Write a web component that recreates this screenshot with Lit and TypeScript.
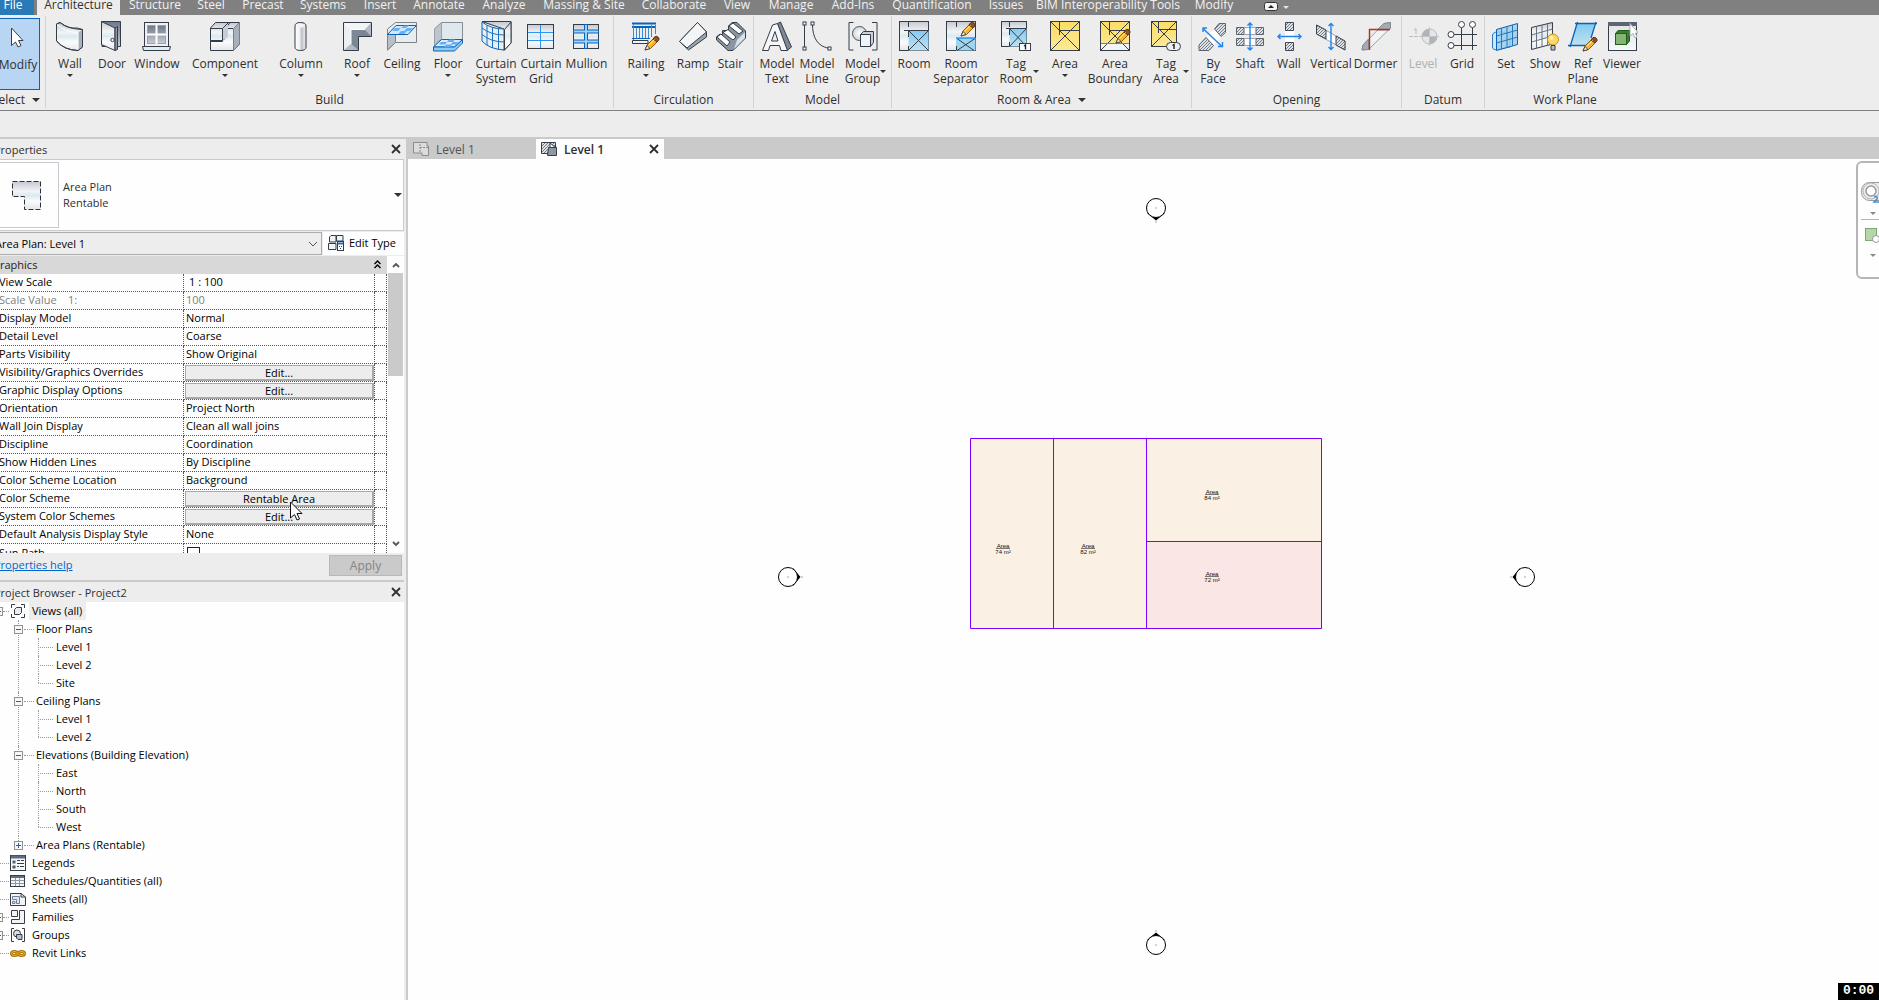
import { LitElement, html, svg, css, nothing } from "lit";
import { customElement } from "lit/decorators.js";
import { classMap } from "lit/directives/class-map.js";

const pencil = svg`
  <path d="M0 14 L2 9 L9.500 1.500 L13 5 L5.500 12.500 Z" fill="#f9b52c" stroke="#8a5a10"/>
  <path d="M8 3 L9.500 1 Q11 -.5 13 1 Q15 3 13.500 4.500 L12 6 Z" fill="#8c5227" stroke="#5d3517"/>
  <path d="M0 14 L2 9.500 L5 12.500 Z" fill="#fff6dc" stroke="#4b4b4b"/>
  <path d="M3.500 9.500 L9.500 3.500" stroke="#ffe9a8" fill="none"/>`;

const planLines = svg`<path d="M10.500 2 V15 M10.500 10.500 H30 M1.500 1.500 L30.500 30.500 M30.500 1.500 L1.500 30.500" class="k"/>`;

const icons: Record<string, unknown> = {
  modify: svg`<path d="M9.500 7 V24.500 L13.500 21 L16 26 L19 24.500 L16.500 19.500 H21 Z" fill="#fff" stroke="#3a3f47"/>`,
  wall: svg`<path d="M2.500 4 L6 2.500 Q14 9 23 8 L28.500 9.500 V27 L24 30.500 Q10 30 2.500 21 Z" fill="url(#face)" class="k"/>
    <path d="M24 12.500 L28.500 9.500 V27 L24 30.500 Z" fill="#a9b0bb"/><path d="M2.500 4 Q12 12.500 24 12.500 V30" class="w"/>
    <path d="M2.500 4 L6 2.500 Q14 9 28.500 9.500 V27 L24 30.500 Q10 30 2.500 21 Z" class="k"/>`,
  door: svg`<path d="M5.500 1.500 H24.500 V26.500 H6 Z" fill="url(#dark)" class="k"/>
    <path d="M5.500 1.500 L19 8 V30.500 L5.500 24.500 Z" fill="url(#face)" class="k"/><path d="M19 8 L21.500 6.500 V29.500 L19 30.500 Z" fill="#8d95a3" class="k"/>
    <circle cx="16.500" cy="20" r="1.700" fill="#fff" class="k"/>`,
  window: svg`<rect x="3.500" y="2.500" width="24" height="24" fill="#eef0f3" class="k"/>
    <rect x="6.500" y="5.500" width="18" height="18" fill="url(#dark)" stroke="#9aa1ac"/><path d="M15.500 5 V24 M6 14.500 H25" stroke="#fff" stroke-width="2" fill="none"/>
    <path d="M1.500 26.500 H29.500 L28.500 30.500 H2.500 Z" fill="#dcedf3" class="k"/>`,
  component: svg`<path d="M1.500 8 L6.500 2.500 H30.500 V24 L24.500 30.500 H1.500 V21.500 H13.500 L1.500 21 Z" fill="url(#face)" class="k"/>
    <path d="M24.500 8.500 L30.500 2.500 V24 L24.500 30.500 Z" fill="#a9b0bb" stroke="#77808d"/>
    <path d="M1.500 8.500 H13.500 L19.500 2.500 M1.500 8.500 V20.500 H13.500 V8.500 M13.500 20.500 L16.500 18 V8.500 H24 M16.500 8.500 L21 2.500" class="k"/>
    <path d="M14 9 L19 4 V17 L14 20 Z" fill="#c8cdd5"/>`,
  column: svg`<path d="M10 6 Q10 2.500 15.500 2.500 Q21 2.500 21 6 V27 Q21 30.500 15.500 30.500 Q10 30.500 10 27 Z" fill="url(#round)" class="k"/>
    <ellipse cx="15.500" cy="5.500" rx="4" ry="2" fill="#f2f4f6"/>`,
  roof: svg`<path d="M2.500 2.500 H30.500 V16.500 H17.500 V30.500 H2.500 Z" fill="#c9cdd4"/>
    <path d="M2.500 2.500 H30.500 L24 9.500 H10 Z" fill="#f3f4f6"/><path d="M2.500 2.500 L10 9.500 V24 L2.500 30.500 Z" fill="#eceef1"/>
    <path d="M10 9.500 H24 L30.500 16.500 H17.500 Z M10 9.500 L17.500 16.500 V30.500 L10 24 Z" fill="#7d8694"/>
    <path d="M2.500 30.500 L10 24 L17.500 30.500 Z M30.500 2.500 V16.500 L24 9.500 Z" fill="#b3bac4"/>
    <path d="M2.500 2.500 L10 9.500 H24 M10 9.500 V24" stroke="#fff" fill="none"/><path d="M2.500 2.500 H30.500 V16.500 H17.500 V30.500 H2.500 Z" class="k"/>`,
  ceiling: svg`<path d="M1.500 9 L9.500 2.500 H30.500 V22.500 H9.500 L1.500 30 Z" fill="#e8edf0" stroke="#7d838b"/>
    <path d="M1.500 14 L9.500 12 V22.500 L1.500 30 Z" fill="#b9bfc8" stroke="#7d838b"/><path d="M1.500 14.500 L10 5.500 H30.500 L22 14.500 Z" fill="#cfe8fd" stroke="#0a63b7"/>
    <path d="M9 8 h6 l-3 3 h-6 z M21 8 h6 l-3 3 h-6 z M15 11 h6 l-3 3 h-6 z M18 5.500 h5 l-3 2.500 h-5 z" fill="#67b2f6"/>`,
  floor: svg`<path d="M2.500 20.500 V9 L9.500 2.500 H30.500 V19 L22 27 H2.500 Z" fill="#dfe8ec" stroke="#858b93"/><path d="M2.500 9 L9.500 2.500 V18.500 L2.500 25 Z" fill="#bfc5cd" stroke="#9aa0a8"/>
    <path d="M1.500 27 L9.500 19.500 H30.500 L22.500 27 Z" fill="#d8ecfd" stroke="#0a63b7"/><path d="M1.500 27 V31 H22.500 L30.500 23 V19.500 L22.500 27 Z" fill="#8ccbf3" stroke="#0a63b7"/>
    <path d="M9 22 h6 l-2 2.500 h-6 z M21 22 h5 l-2 2.500 h-5.500 z M14 24.500 h6 l-2 2.500 h-6 z M17 19.500 h6 l-2 2.500 h-6 z" fill="#62adf3"/>`,
  curtainSystem: svg`<path d="M2 1.500 H31 V23 L24 30.500 V9 Z" fill="url(#face)" class="k"/><path d="M2 2 Q11 9 24 9 V30 Q9 29 2 21 Z" fill="#e6eff4" stroke="#0a63b7"/>
    <path d="M2 8 Q11 15 24 15 M2 14.500 Q11 22 24 22 M7 5.500 V25 M12.500 8 V28 M18.500 8.500 V29.500" stroke="#1b6fc0" fill="none"/>
    <path d="M24.500 9.500 L31 2 V23 L24.500 30 Z" fill="url(#face)" class="k"/>`,
  curtainGrid: svg`<rect x="2.500" y="4.500" width="26" height="24" fill="url(#face)" class="k"/><path d="M3 12.500 H28 M3 20.500 H28 M15.500 5 V28" stroke="#2f93f5" fill="none"/>`,
  mullion: svg`<rect x="2.500" y="4.500" width="25" height="24" fill="url(#face)" class="k"/><path d="M2 11.500 H28 M2 21.500 H28 M15 4 V29" stroke="#0a63b7" stroke-width="4" fill="none"/>
    <path d="M3 11.500 H27 M3 21.500 H27 M15 5 V28" stroke="#9fd2fa" stroke-width="2" fill="none"/>`,
  railing: svg`<path d="M2 3.500 H26 M2 7 H26" stroke="#0a63b7" stroke-width="2" fill="none"/><path d="M3.500 5 V20 M6.500 8 V19 M9.500 8 V19 M12.500 8 V19 M15.500 8 V19 M18.500 8 V19 M21.500 5 V17 M25.500 5 V14" stroke="#3c8ad0" fill="none"/>
    <path d="M2 18.500 H20" stroke="#0a63b7" fill="none"/><path d="M2.500 20.500 H18 V23.500 H2.500 Z" fill="#f4f5f7" class="k"/><g transform="translate(15 16)">${pencil}</g>`,
  ramp: svg`<path d="M2.500 21.500 L20.500 2.500 L29.500 12 L29.500 17 L11.500 30 Z" fill="#9ba3af" class="k"/><path d="M2.500 21.500 L20.500 2.500 L29.500 12 L10 28 Z" fill="#f4f5f7" class="k"/>`,
  stair: svg`<path d="M1.500 17 L4 14.500 L7.500 14.500 V10.500 L13.500 10.500 V6 L17 2.500 H22 L30.500 11 V18 L18 30.500 H13 L1.500 20 Z" fill="#8b94a2" class="k"/>
    <path d="M2 17 L6 14 L15 22 L12 26 Z M8 12.500 L13 9.500 L21 17 L18 20 Z M14 6 L18 3 L28 11 L24 14 Z" fill="#fff" class="k"/><path d="M22 20 L30 12 V18 L19 29 Z" fill="#d7e3ea"/>`,
  modelText: svg`<path d="M16.500 3.500 L19.500 2 L30.500 27 L26 30.500 Z" fill="#7f8896" class="k"/><path fill-rule="evenodd" d="M1.500 30.500 L11.500 5 L16.500 3.500 L26.500 30.500 H20 L18.500 25.500 H9 L7.500 30.500 Z M10.500 21 H17 L14 11.500 Z" fill="#f6f7f9" class="k"/>`,
  modelLine: svg`<path d="M3.500 3 V29 M11.500 3 Q11 26 29 28.500" class="k"/><g fill="#fff" class="k"><rect x="2" y="2" width="3" height="3"/><rect x="2" y="27" width="3" height="3"/><rect x="10" y="2" width="3" height="3"/><rect x="27" y="27" width="3" height="3"/></g>`,
  modelGroup: svg`<path d="M6.500 2.500 H2 V30 H6.500 M25 2.500 H30 V30 H25" class="k" /><circle cx="12.500" cy="13.500" r="7" fill="url(#ball)" stroke="#4b535f"/>
    <path d="M13.500 14.500 L16.500 11.500 H26.500 V22.500 L23.500 26.500 H13.500 Z" fill="#cbd0d8" class="k"/><path d="M13.500 14.500 H23.500 V26.500 H13.500 Z" fill="#eef5f8" class="k"/>`,
  room: svg`<rect x="1.500" y="1.500" width="29" height="29" fill="url(#face)" class="k"/><rect x="10.500" y="10.500" width="20" height="20" fill="url(#sky)" /><path d="M10.500 2 V7 M10.500 10.500 V17 M10.500 26 V30 M6 10.500 H30.500 M10.500 10.500 L30.500 30.500 M30.500 10.500 L10.500 30.500" class="k"/>`,
  roomSeparator: svg`<rect x="1.500" y="1.500" width="29" height="29" fill="url(#face)" class="k"/><rect x="11" y="18" width="19.500" height="12.500" fill="#9fd5ee"/><path d="M11.500 2 V7 M11.500 26 V30 M12 18.500 L29 30.500 M30 18.500 L12 30.500" class="k"/><path d="M11 18 H30" stroke="#2f93f5" fill="none" stroke-width="1.500"/><g transform="translate(16 2)">${pencil}</g>`,
  tagRoom: svg`<rect x="1.500" y="1.500" width="25" height="25" fill="url(#face)" class="k"/><rect x="9.500" y="8.500" width="17" height="18" fill="url(#sky)"/><path d="M9.500 2 V7 M6 8.500 H26 M9.500 8.500 V15 M9.500 22 V26 M10 9 L26 26 M26 9 L10 26" class="k"/>
    <rect x="19.500" y="23.500" width="11" height="7" fill="#fff" class="k"/><path d="M24 26 L25.500 25 V29.500" stroke="#222" stroke-width="1.400" fill="none"/>`,
  area: svg`<rect x="1.500" y="1.500" width="29" height="29" fill="url(#sun)" class="k"/>${planLines}`,
  areaBoundary: svg`<rect x="1.500" y="1.500" width="29" height="29" fill="url(#sun)" class="k"/><rect x="2" y="24" width="28" height="6" fill="#f2f5f8"/>${planLines}<path d="M2 23.500 H30" stroke="#2f93f5" fill="none"/><g transform="translate(17 9)">${pencil}</g>`,
  tagArea: svg`<rect x="1.500" y="1.500" width="25" height="25" fill="url(#sun)" class="k"/><path d="M8.500 2 V13 M8.500 9.500 H26 M1.500 1.500 L26.500 26.500 M26.500 1.500 L1.500 26.500" class="k"/>
    <rect x="16.500" y="22.500" width="14" height="8" rx="4" fill="#eef0f3" class="k"/><path d="M22.500 25.500 L24 24.500 V29" stroke="#222" stroke-width="1.400" fill="none"/>`,
  byFace: svg`<path d="M2 30 V25 L22 3.500 H28.500 V12 L12 30 Z" fill="#fff"/><path d="M2 30.500 V25 L9 17.500 L16.500 25.500 L12 30.500 Z M17.500 9 L22 3.500 H28.500 V12.500 L24 16.500 Z" fill="url(#hatch)" stroke="#5c6470"/><path d="M6 8.500 L25 26.500 M6 12 V8 H10 M21 26.500 H25.500 V22" stroke="#1f83f0" stroke-width="1.400" fill="none"/>`,
  shaft: svg`<path d="M2 7.500 H30 V14.500 H2 Z M2 18.500 H30 V25.500 H2 Z" fill="#fff"/><path d="M2.500 7.500 H10 V14.500 H2.500 Z M2.500 18.500 H10 V25.500 H2.500 Z M22 7.500 H29.500 V14.500 H22 Z M22 18.500 H29.500 V25.500 H22 Z" fill="url(#hatch)" stroke="#5c6470"/><path d="M10 7.500 H22 M10 14.500 H22 M10 18.500 H22 M10 25.500 H22" stroke="#a0a6af" fill="none"/><path d="M16 3 V30 M13.500 5.500 L16 3 L18.500 5.500 M13.500 27.500 L16 30 L18.500 27.500" stroke="#1f83f0" stroke-width="1.400" fill="none"/>`,
  wallOpening: svg`<rect x="12" y="11" width="9" height="11" fill="#fff"/><path d="M12.500 2.500 H20.500 V10.500 H12.500 Z M12.500 22.500 H20.500 V30.500 H12.500 Z" fill="url(#hatch)" stroke="#3f4754"/><path d="M5 16.500 H28 M7.500 14 L5 16.500 L7.500 19 M25.500 14 L28 16.500 L25.500 19" stroke="#1f83f0" stroke-width="1.400" fill="none"/>`,
  vertical: svg`<path d="M1.500 5 L30 21 V30 L1.500 14 Z" fill="#fff" stroke="#9aa1ac"/><path d="M1.500 5 L11 10 V19 L1.500 14 Z M21 16 L30 21 V30 L21 25 Z" fill="url(#hatch)" stroke="#3f4754"/><path d="M16 3.500 V29.500 M13.500 6 L16 3.500 L18.500 6 M13.500 27 L16 29.500 L18.500 27" stroke="#1f83f0" stroke-width="1.400" fill="none"/>`,
  dormer: svg`<path d="M2 30 L3 25 L24 3.500 L30.500 2.500 V8 L9 29 Z" fill="#f1f4f5" stroke="#9aa1ac"/><path d="M2 30 L3 25 L8.500 19 V29.500 Z M17 10 L24 3.500 L30.500 2.500 V8 L29 10 Z" fill="#a5abb4" stroke="#828993"/><path d="M9.500 30 V9.500 H30" stroke="#c02a1c" stroke-width="1.400" fill="none"/>`,
  level: svg`<path d="M2 16.500 H6 M7 16.500 H11" stroke="#b9bcc1" fill="none"/><path d="M7 10 L9 8.500 V14" stroke="#b9bcc1" fill="none"/><circle cx="22.500" cy="16.500" r="7.500" fill="#e6e6e6" stroke="#b5b8bd"/><path d="M22.500 16.500 V9 A7.500 7.500 0 0 0 15 16.500 Z M22.500 16.500 V24 A7.500 7.500 0 0 0 30 16.500 Z" fill="#b0b3b8"/><path d="M22.500 7 V26 M12 16.500 H32" stroke="#c1c4c8" fill="none"/>`,
  grid: svg`<path d="M15.500 8 V30 M26.500 8 V30 M8 14.500 H31 M8 25.500 H31" class="k"/><g fill="#fff" class="k"><circle cx="15.500" cy="4.500" r="3"/><circle cx="26.500" cy="4.500" r="3"/><circle cx="5" cy="14.500" r="3"/><circle cx="5" cy="25.500" r="3"/></g>`,
  set: svg`<path d="M2.500 15 Q3 12 8 12 L20 12.500 V27 L8 29 Q3 31 2.500 27 Z" fill="#cfe6f4" stroke="#3176b5"/><path d="M6.500 9.500 L27.500 3.500 V24.500 L6.500 30.500 Z" fill="#9ccfee" fill-opacity=".85" stroke="#0a63b7"/><path d="M11.500 8 V29 M17 7 V28 M22.500 5 V26 M6.500 16 L27.500 10 M6.500 23 L27.500 17" stroke="#2676bd" fill="none"/>`,
  show: svg`<path d="M2.500 7.500 L23.500 2.500 V24 L2.500 29.500 Z" fill="url(#face)" class="k"/><path d="M7.500 6.500 V28 M13 5 V27 M18.500 4 V25 M2.500 15 L23.500 9 M2.500 22 L23.500 16" stroke="#6b7380" fill="none"/>
    <circle cx="24" cy="19.500" r="5.500" fill="#fcd766" stroke="#c99414"/><circle cx="22.500" cy="18" r="2" fill="#fff3c4"/><path d="M22 25.500 H26 V30 H22 Z" fill="#b8bdc5" class="k"/>`,
  refPlane: svg`<path d="M9.500 3.500 H28.500 L21 25.500 H3.500 Z" fill="url(#sky)"/><path d="M8 3.500 H30 M1 25.500 H21 M10.500 2 L3 27 M29 2 L24 18" stroke="#0a63b7" stroke-width="1.300" fill="none"/><g transform="translate(16 17)">${pencil}</g>`,
  viewer: svg`<rect x="2.500" y="2.500" width="28" height="28" fill="url(#pane)" class="k"/><rect x="2" y="2" width="29" height="4" fill="#5c6470"/><path d="M9.500 13.500 L12 10.500 H23.500 V21 L20.500 24.500 H9.500 Z" fill="#3f7d36" stroke="#1f5f16"/><rect x="9.500" y="13.500" width="11" height="11" fill="#84b577" stroke="#1f5f16"/><path d="M24 3.500 V16 L27 13.500 L29 18 L31 17 L29.500 13 H32.500 Z" fill="#fff" stroke="#a9adb3"/>`,
};

const small: Record<string, unknown> = {
  views: svg`<path d="M5 1.500 H1.500 V5 M11 1.500 H14.500 V5 M5 14.500 H1.500 V11 M11 14.500 H14.500 V11" class="k"/><path d="M4.500 6.500 L6.500 4.500 H11.500 V9.500 L9.500 11.500 H4.500 Z" fill="#e8ebef" class="k"/>`,
  legends: svg`<rect x=".5" y=".5" width="15" height="15" fill="#f6f7f9" class="k"/><path d="M1 2 H15" stroke="#5d6b80" stroke-width="3"/><rect x="2.500" y="5.500" width="3" height="3" fill="#566"/><circle cx="4" cy="12" r="1.800" fill="#566"/><path d="M7 5.500 H10 M11 5.500 H14 M7 8.500 H14 M7 11.500 H9 M10 11.500 H14" class="k"/>`,
  schedules: svg`<rect x=".5" y="2.500" width="14" height="11" fill="#f4f6f8" class="k"/><path d="M1 4 H14" stroke="#5d7088" stroke-width="2"/><path d="M1 7.500 H14 M1 10.500 H14 M5.500 5 V13 M9.500 5 V13" stroke="#9199a5" fill="none"/>`,
  sheets: svg`<path d="M.5 2.500 H11 L15.500 6 V14.500 H.5 Z" fill="#f2f4f7" class="k"/><path d="M11 2.500 V6 H15.500" class="k"/><path d="M2.500 5.500 H9.500 V12.500 H6.500 V8.500 H2.500 Z M2.500 10.500 H5 V12.500 H2.500 Z" fill="#dfe7f2" stroke="#6d7f99"/>`,
  families: svg`<path d="M1.500 1.500 H7.500 V7.500 H1.500 Z M9.500 1.500 H14.500 V14.500 H1.500 V10.500 H9.500 Z" fill="#f2f4f7" class="k"/>`,
  groups: svg`<path d="M4 1.500 H1.500 V14.500 H4 M12 1.500 H14.500 V14.500 H12" class="k"/><circle cx="7" cy="6.500" r="3.500" fill="#d8dde3" class="k"/><path d="M6.500 7.500 H12 V12.500 H8 L6.500 11 Z" fill="#b9c0ca" class="k"/>`,
  links: svg`<g fill="none" stroke="#a8700a" stroke-width="3"><ellipse cx="4.500" cy="8.500" rx="3" ry="2"/><ellipse cx="11.500" cy="8.500" rx="3" ry="2"/></g><g fill="none" stroke="#f2c230"><ellipse cx="4.500" cy="8.500" rx="3" ry="2"/><ellipse cx="11.500" cy="8.500" rx="3" ry="2"/></g><path d="M5 8.500 H11" stroke="#c98a0c" stroke-width="2"/>`,
  tabPlan: svg`<path d="M.5 1.500 H14 V5 H15.500 V14.500 H9 V12 H.5 Z" fill="#dcdcdc" stroke="#8b8b8b"/><path d="M7 3 V11 M7 6.500 H15" stroke="#8b8b8b" stroke-dasharray="2 1" fill="none"/>`,
  tabArea: svg`<path d="M.5 1.500 H14.500 V12.500 H.5 Z" fill="url(#hatch)" class="k"/><path d="M9 6 V2 L14 6" fill="#fff" class="k"/><path d="M7.500 6.500 H15.500 V14.500 H6.500 Z" fill="#8e97a5" class="k"/>`,
  editType: svg`<path d="M1.500 2 L3 .5 H8 V7 H1.500 Z M8.500 .5 H15 V6 H8.500 Z M.5 8.500 H8 V14.500 H.5 Z" fill="#eef3f6" class="k"/><rect x="9.500" y="6.500" width="6" height="9" fill="#fff" class="k"/><path d="M10 8.500 H15" stroke="#1f6fd0" stroke-width="2"/><path d="M11 11.500 H12 M13 11.500 H14 M12 13.500 H13" stroke="#345"/>`,
};

type Tool = { icon: string; lines: string[]; menu?: "below" | "side"; off?: boolean };
const t = (icon: string, label: string, menu?: "below" | "side", off = false): Tool => ({ icon, lines: label.split("|"), menu, off });

const panels: { key: string; title: string; more?: boolean; tools: Tool[] }[] = [
  { key: "build", title: "Build", tools: [t("wall", "Wall", "below"), t("door", "Door"), t("window", "Window"), t("component", "Component", "below"), t("column", "Column", "below"), t("roof", "Roof", "below"), t("ceiling", "Ceiling"), t("floor", "Floor", "below"), t("curtainSystem", "Curtain|System"), t("curtainGrid", "Curtain|Grid"), t("mullion", "Mullion")] },
  { key: "circulation", title: "Circulation", tools: [t("railing", "Railing", "below"), t("ramp", "Ramp"), t("stair", "Stair")] },
  { key: "model", title: "Model", tools: [t("modelText", "Model|Text"), t("modelLine", "Model|Line"), t("modelGroup", "Model|Group", "side")] },
  { key: "rooms", title: "Room & Area", more: true, tools: [t("room", "Room"), t("roomSeparator", "Room|Separator"), t("tagRoom", "Tag|Room", "side"), t("area", "Area", "below"), t("areaBoundary", "Area|Boundary"), t("tagArea", "Tag|Area", "side")] },
  { key: "opening", title: "Opening", tools: [t("byFace", "By|Face"), t("shaft", "Shaft"), t("wallOpening", "Wall"), t("vertical", "Vertical"), t("dormer", "Dormer")] },
  { key: "datum", title: "Datum", tools: [t("level", "Level", undefined, true), t("grid", "Grid")] },
  { key: "workplane", title: "Work Plane", tools: [t("set", "Set"), t("show", "Show"), t("refPlane", "Ref|Plane"), t("viewer", "Viewer")] },
];

const tabs = ["Architecture", "Structure", "Steel", "Precast", "Systems", "Insert", "Annotate", "Analyze", "Massing & Site", "Collaborate", "View", "Manage", "Add-Ins", "Quantification", "Issues", "BIM Interoperability Tools", "Modify"];

const props: { name: string; value?: string; button?: string; kind?: string }[] = [
  { name: "View Scale", value: "1 : 100", kind: "inset" },
  { name: "Scale Value    1:", value: "100", kind: "off" },
  { name: "Display Model", value: "Normal" },
  { name: "Detail Level", value: "Coarse" },
  { name: "Parts Visibility", value: "Show Original" },
  { name: "Visibility/Graphics Overrides", button: "Edit..." },
  { name: "Graphic Display Options", button: "Edit..." },
  { name: "Orientation", value: "Project North" },
  { name: "Wall Join Display", value: "Clean all wall joins" },
  { name: "Discipline", value: "Coordination" },
  { name: "Show Hidden Lines", value: "By Discipline" },
  { name: "Color Scheme Location", value: "Background" },
  { name: "Color Scheme", button: "Rentable Area" },
  { name: "System Color Schemes", button: "Edit..." },
  { name: "Default Analysis Display Style", value: "None" },
];

type Node = { label: string; icon?: string; mark?: "minus" | "plus"; selected?: boolean; kids?: Node[] };
const leaf = (...names: string[]): Node[] => names.map((label) => ({ label }));
const tree: Node[] = [
  { label: "Views (all)", icon: "views", mark: "minus", selected: true, kids: [
    { label: "Floor Plans", mark: "minus", kids: leaf("Level 1", "Level 2", "Site") },
    { label: "Ceiling Plans", mark: "minus", kids: leaf("Level 1", "Level 2") },
    { label: "Elevations (Building Elevation)", mark: "minus", kids: leaf("East", "North", "South", "West") },
    { label: "Area Plans (Rentable)", mark: "plus" },
  ] },
  { label: "Legends", icon: "legends" },
  { label: "Schedules/Quantities (all)", icon: "schedules" },
  { label: "Sheets (all)", icon: "sheets" },
  { label: "Families", icon: "families", mark: "plus" },
  { label: "Groups", icon: "groups", mark: "plus" },
  { label: "Revit Links", icon: "links" },
];

const tags = [
  { x: 595, y: 389, size: "74 m²" },
  { x: 680, y: 389, size: "82 m²" },
  { x: 804, y: 335, size: "84 m²" },
  { x: 804, y: 417, size: "72 m²" },
];
const markers = [
  { x: 748, y: 49, turn: 90 },
  { x: 380, y: 418, turn: 0 },
  { x: 1117, y: 418, turn: 180 },
  { x: 748, y: 786, turn: 270 },
];

@customElement("app-root")
export class AppRoot extends LitElement {
  static styles = css`
    :host { display: block; overflow: hidden; font-family: "Segoe UI", "Open Sans", "Noto Sans", sans-serif; font-size: 12px; line-height: 15px; color: #2f2f2f; }
    * { box-sizing: border-box; }
    button, select { font: inherit; color: inherit; background: none; border: 0; padding: 0; margin: 0; }
    ul { list-style: none; margin: 0; padding: 0; }
    svg { display: block; flex: none; }
    .k { stroke: #353d49; }
    path.k:not([fill]) { fill: none; }
    .w { fill: none; stroke: #fff; }
    .defs { position: absolute; width: 0; height: 0; }
    .shell { position: relative; display: flex; flex-direction: column; height: 100vh; margin-left: -8px; background: #ededed; }

    .tabs { display: grid; grid-template-columns: 42px 86px 70px 42px 62px 58px 56px 62px 68px 92px 88px 38px 70px 54px 104px 44px 160px 52px auto; justify-content: start; height: 15px; flex: none; background: #808080; }
    .tab { color: #f2f2f2; height: 15px; line-height: 10px; padding-bottom: 5px; text-align: center; white-space: nowrap; }
    .file { background: #2a7ab8; color: #fff; }
    .active { background: #ededed; color: #333; margin-left: 3px; }
    .mini { display: flex; align-items: center; gap: 4px; height: 11px; padding-left: 24px; }

    .ribbon { display: flex; flex: none; height: 96px; border-bottom: 1px solid #808080; padding-top: 1px; }
    .panel { display: flex; flex-direction: column; height: 92px; border-right: 1px solid #d2d2d2; }
    .panel:last-child { border-right: 0; }
    .tools { display: grid; flex: 1; }
    .build { grid-template-columns: 48px 36px 54px 82px 70px 42px 48px 44px 52px 38px 53px; }
    .circulation { grid-template-columns: 64px 30px 45px; }
    .model { grid-template-columns: 46px 34px 57px; }
    .rooms { grid-template-columns: 44px 50px 60px 38px 62px 40px; padding-right: 5px; }
    .opening { grid-template-columns: 42px 32px 46px 38px 51px; }
    .datum { grid-template-columns: 42px 36px; padding-right: 4px; }
    .workplane { grid-template-columns: 42px 36px 40px 38px; padding-right: 4px; }
    .tool { display: flex; flex-direction: column; align-items: center; padding-top: 4px; width: 100%; white-space: nowrap; position: relative; }
    .tool svg.icon { margin-bottom: 4px; }
    .tool .off { color: #b0b0b0; }
    .labels { display: flex; flex-direction: column; align-items: center; width: 0; }
    .arrow { width: 0; height: 0; border: 3px solid transparent; border-top-color: #333; border-bottom: 0; }
    .tool .below { margin-top: 3px; }
    .tool .side { position: absolute; left: calc(50% + 17px); top: 54px; }
    .ribbon .title { display: flex; justify-content: center; align-items: center; gap: 7px; height: 17px; }
    .big { border-width: 4px; border-bottom: 0; }
    .select { width: 54px; }
    .select .tool { width: 48px; height: 72px; margin-top: 2px; padding-top: 2px; padding-left: 4px; background: #b8d6f3; border: 1px solid #0a63b7; }
    .select .labels { width: auto; }
    .select .title { margin-top: auto; justify-content: flex-end; padding-right: 5px; }

    .options { flex: none; height: 28px; border-bottom: 2px solid #cacaca; }
    .main { display: flex; flex: 1; min-height: 0; }
    .dock { flex: none; display: flex; flex-direction: column; width: 416px; border-right: 2px solid #cacaca; padding-right: 2px; font-size: 11px; }
    .head { display: flex; align-items: center; justify-content: space-between; height: 20px; padding: 0 3px 0 2px; flex: none; }
    .x { width: 10px; height: 10px; }
    .type { display: flex; align-items: center; height: 72px; border: 1px solid #c9cacf; background: #fefefe; padding: 2px 1px 2px 0; line-height: 16px; flex: none; }
    .thumb { display: flex; align-items: center; width: 66px; height: 66px; border: 1px solid #c9cacf; padding-left: 16px; margin-right: 4px; }
    .type .arrow { margin-left: auto; }
    .filter { display: flex; height: 25px; padding: 1px 0; gap: 1px; flex: none; color: #000; }
    .combo { position: relative; width: 330px; }
    .combo select { appearance: none; width: 100%; height: 23px; border: 1px solid #adadad; padding-left: 2px; background: #ededed; }
    .combo svg { position: absolute; right: 4px; top: 9px; }
    .edit-type { display: flex; align-items: center; gap: 5px; flex: 1; background: #fefefe; padding-left: 5px; padding-bottom: 2px; }
    .list { display: flex; height: 297px; overflow: hidden; flex: none; background: #fefefe; }
    table { table-layout: fixed; width: 395px; border-spacing: 0; color: #000; align-self: flex-start; }
    tr { height: 18px; }
    th, td { padding: 0 0 2px; height: 18px; line-height: 15px; text-align: left; font-weight: 400; white-space: pre; border-bottom: 1px dotted #555; border-right: 1px dotted #555; }
    .group { background: #d8d8d8; border: 0; color: #222; }
    .grouprow { display: flex; justify-content: space-between; align-items: center; padding-right: 6px; }
    .name { padding-left: 7px; }
    .c1 { width: 192px; } .c2 { width: 191px; } .c3 { width: 12px; }
    .value { padding-left: 2px; }
    .inset { padding-left: 5px; }
    .off { color: #808080; }
    .cellbtn { padding: 1px 0 0 1px; }
    .cellbtn button { display: block; width: 189px; height: 16px; line-height: 13px; border: 1px solid #a9a9a9; border-right-width: 2px; border-bottom-width: 2px; background: #ededed; text-align: center; }
    .check { appearance: none; display: block; width: 13px; height: 13px; border: 1px solid #222; margin: 3px 0 0 1px; background: #fff; }
    .bar { display: flex; flex-direction: column; justify-content: space-between; align-items: center; flex: 1; padding: 6px 0; }
    .bar .thumbbar { width: 15px; height: 103px; background: #cacaca; margin: 5px 0 auto; }
    .foot { display: flex; justify-content: space-between; align-items: flex-start; height: 29px; border-bottom: 2px solid #cacaca; padding: 2px 2px 0; flex: none; }
    .foot a { color: #0066cc; padding-top: 2px; }
    .foot button { width: 73px; height: 21px; border: 1px solid #b8b8b8; background: #cacaca; color: #858585; font-size: 12px; }

    .tree { flex: 1; background: #fefefe; color: #000; min-height: 0; }
    .row { display: flex; align-items: center; height: 18px; position: relative; }
    .text { padding-bottom: 2px; }
    .mark { width: 9px; height: 9px; position: relative; background: #fff; }
    .dots { height: 1px; border-top: 1px dotted #999; }
    .l1 > .row { padding-left: 2px; }
    .l1 > .row .dots { width: 6px; margin: 0 1px 0 0; }
    .l1 > .row .dots.long { width: 15px; }
    .l1 > .row .text { margin-left: 3px; padding: 1px 4px 2px 3px; }
    .selected { background: #ededed; }
    .s2 { margin-left: 26px; }
    .s3 { margin-left: 20px; }
    .l2, .l3 { position: relative; }
    .l2::before, .l3::before { content: ""; position: absolute; left: 0; top: 0; bottom: 0; border-left: 1px dotted #999; }
    .l2:last-child::before, .l3:last-child::before { bottom: auto; height: 9px; }
    .l2 > .row { margin-left: -4px; }
    .l2 > .row .dots { width: 10px; margin: 0 2px 0 1px; }
    .l3 > .row .dots { width: 15px; margin-right: 3px; }

    .work { display: flex; flex-direction: column; flex: 1; min-width: 0; background: #fefefe; }
    .docs { display: flex; height: 20px; background: #cacaca; flex: none; }
    .doc { display: flex; align-items: center; gap: 7px; width: 128px; padding: 0 5px; color: #555; }
    .doc.open { background: #fefefe; color: #2f2f2f; font-weight: 600; }
    .doc .x { margin-left: auto; }
    .canvas { position: relative; flex: 1; min-height: 0; overflow: hidden; }
    .canvas > svg { width: 100%; height: 100%; }
    .tagtext { font: 6px "Liberation Sans", Arial, sans-serif; text-anchor: middle; fill: #111; }
    .nav { position: absolute; right: -8px; top: 2px; width: 31px; border: 2px solid #b5b5b5; border-radius: 6px; height: 118px; background: #fefefe; padding: 17px 0 0 3px; }
    .nav .arrow { border-top-color: #8a8a8a; margin: 8px 0 4px 9px; }
    .nav hr { border: 0; border-top: 1px solid #b5b5b5; margin: 0 0 8px; }
    .clock { position: absolute; right: 0; bottom: 0; width: 41px; height: 17px; background: #000; color: #fff; font: 700 13px/16px "Liberation Mono", monospace; text-align: center; }
    .cursor { position: absolute; left: 298px; top: 501px; }
  `;

  private x() {
    return svg`<svg class="x" viewBox="0 0 10 10"><path d="M1 1 L9 9 M9 1 L1 9" stroke="#2f2f2f" stroke-width="1.800"/></svg>`;
  }

  private icon(name: string) {
    return html`<svg class="icon" width="32" height="32" viewBox="0 0 32 32" aria-hidden="true">${icons[name]}</svg>`;
  }

  private small(name: string) {
    return html`<svg width="16" height="16" viewBox="0 0 16 16" aria-hidden="true">${small[name]}</svg>`;
  }

  private tool(tool: Tool) {
    return html`<button class="tool" ?disabled=${tool.off}>
      ${this.icon(tool.icon)}
      <span class=${classMap({ labels: true, off: !!tool.off })}>${tool.lines.map((l) => html`<span>${l}</span>`)}</span>
      ${tool.menu ? html`<span class="arrow ${tool.menu}"></span>` : nothing}
    </button>`;
  }

  private node(n: Node, depth: number): unknown {
    const mark = n.mark
      ? html`<svg class="mark" viewBox="0 0 9 9"><rect x=".5" y=".5" width="8" height="8" fill="#f8f8f8" stroke="#919191"/><path d=${n.mark === "plus" ? "M2 4.500 H7 M4.500 2 V7" : "M2 4.500 H7"} stroke="#3b5ba5"/></svg>`
      : nothing;
    return html`<li class="l${depth}">
      <div class="row">${mark}<span class="dots ${n.mark ? "" : "long"}"></span>${n.icon ? this.small(n.icon) : nothing}<span class="text ${n.selected ? "selected" : ""}">${n.label}</span></div>
      ${n.kids ? html`<ul class="s${depth + 1}">${n.kids.map((k) => this.node(k, depth + 1))}</ul>` : nothing}
    </li>`;
  }

  render() {
    return html`
      <svg class="defs" aria-hidden="true"><defs>
        <linearGradient id="face" x2="0" y2="1"><stop offset="0" stop-color="#c5c9d0"/><stop offset=".35" stop-color="#f2f4f6"/><stop offset=".5" stop-color="#dbeaf0"/><stop offset=".7" stop-color="#fbfbfc"/><stop offset="1" stop-color="#e4e6ea"/></linearGradient>
        <linearGradient id="dark" x2="0" y2="1"><stop offset="0" stop-color="#6f7887"/><stop offset="1" stop-color="#c8ccd4"/></linearGradient>
        <linearGradient id="round"><stop offset="0" stop-color="#fff"/><stop offset=".4" stop-color="#f1f2f4"/><stop offset=".6" stop-color="#bfc3ca"/><stop offset="1" stop-color="#eef0f2"/></linearGradient>
        <linearGradient id="sky" x2="0" y2="1"><stop offset="0" stop-color="#83c9f3"/><stop offset="1" stop-color="#c0e2ee"/></linearGradient>
        <linearGradient id="sun" x2="0" y2="1"><stop offset="0" stop-color="#fbdd66"/><stop offset="1" stop-color="#fde996"/></linearGradient>
        <linearGradient id="pane" x2="0" y2="1"><stop offset="0" stop-color="#dfe2e6"/><stop offset="1" stop-color="#f8f9fa"/></linearGradient>
        <radialGradient id="ball"><stop offset="0" stop-color="#fff"/><stop offset="1" stop-color="#d0d4da"/></radialGradient>
        <pattern id="hatch" width="3" height="3" patternUnits="userSpaceOnUse"><rect width="3" height="3" fill="#dfe2e6"/><path d="M0 3 L3 0" stroke="#737b88"/></pattern>
      </defs></svg>
      <div class="shell">
        <nav class="tabs">
          <button class="tab file">File</button>
          ${tabs.map((name, i) => html`<button class="tab ${i === 0 ? "active" : ""}">${name}</button>`)}
          <div class="mini">
            <svg width="15" height="11" viewBox="0 0 15 11"><rect x=".5" y="2.500" width="13" height="8" rx="2" fill="#f4f4f4" stroke="#333"/><path d="M4 8 L7 5 L10 8 Z" fill="#222"/></svg>
            <svg width="6" height="11" viewBox="0 0 6 11"><path d="M0 6 H6 L3 9 Z" fill="#e4e4e4"/></svg>
          </div>
        </nav>
        <section class="ribbon">
          <div class="panel select">
            <button class="tool">${this.icon("modify")}<span class="labels">Modify</span></button>
            <div class="title">Select<span class="arrow big"></span></div>
          </div>
          ${panels.map((p) => html`<div class="panel">
            <div class="tools ${p.key}">${p.tools.map((tool) => this.tool(tool))}</div>
            <div class="title">${p.title}${p.more ? html`<span class="arrow big"></span>` : nothing}</div>
          </div>`)}
        </section>
        <div class="options"></div>
        <div class="main">
          <aside class="dock">
            <div class="head"><span>Properties</span>${this.x()}</div>
            <div class="type">
              <div class="thumb"><svg width="32" height="32" viewBox="0 0 32 32"><path d="M2.500 2.500 H30.500 V30.500 H14.500 V17.500 H2.500 Z" fill="url(#face)" stroke="#2b313b" stroke-dasharray="5 2"/></svg></div>
              <div>Area Plan<br>Rentable</div>
              <span class="arrow big"></span>
            </div>
            <div class="filter">
              <div class="combo">
                <select aria-label="Instance filter"><option>Area Plan: Level 1</option></select>
                <svg width="10" height="6" viewBox="0 0 10 6"><path d="M1 1 L5 5 L9 1" stroke="#555" fill="none"/></svg>
              </div>
              <button class="edit-type">${this.small("editType")}Edit Type</button>
            </div>
            <div class="list">
              <table>
                <colgroup><col class="c1"><col class="c2"><col class="c3"></colgroup>
                <tbody>
                  <tr><th class="group" colspan="3"><div class="grouprow">Graphics<svg width="7" height="9" viewBox="0 0 7 9"><path d="M.5 4 L3.500 1 L6.500 4 M.5 8 L3.500 5 L6.500 8" stroke="#000" stroke-width="1.400" fill="none"/></svg></div></th></tr>
                  ${props.map((p) => html`<tr>
                    <th scope="row" class="name ${p.kind === "off" ? "off" : ""}">${p.name}</th>
                    ${p.button
                      ? html`<td class="cellbtn"><button aria-label="${p.name}: ${p.button}">${p.button}</button></td>`
                      : html`<td class="value ${p.kind ?? ""}">${p.value}</td>`}
                    <td></td>
                  </tr>`)}
                  <tr><th class="name" scope="row"><label for="sun">Sun Path</label></th><td class="value"><input id="sun" class="check" type="checkbox"></td><td></td></tr>
                </tbody>
              </table>
              <div class="bar">
                <svg width="8" height="6" viewBox="0 0 8 6"><path d="M1 5 L4 2 L7 5" stroke="#555" stroke-width="1.800" fill="none"/></svg>
                <span class="thumbbar"></span>
                <svg width="8" height="6" viewBox="0 0 8 6"><path d="M1 1 L4 4 L7 1" stroke="#555" stroke-width="1.800" fill="none"/></svg>
              </div>
            </div>
            <div class="foot"><a href="#help">Properties help</a><button disabled>Apply</button></div>
            <div class="head"><span>Project Browser - Project2</span>${this.x()}</div>
            <ul class="tree">${tree.map((n) => this.node(n, 1))}</ul>
          </aside>
          <main class="work">
            <div class="docs">
              <div class="doc">${this.small("tabPlan")}Level 1</div>
              <div class="doc open">${this.small("tabArea")}Level 1${this.x()}</div>
            </div>
            <div class="canvas">
              <svg viewBox="0 0 1471 841" preserveAspectRatio="xMidYMid slice">
                <path d="M562.500 279.500 H913.500 V469.500 H562.500 Z" fill="#faf1e4"/>
                <path d="M738.500 382.500 H913.500 V469.500 H738.500 Z" fill="#fae6e4"/>
                <path d="M562.500 279.500 H913.500 V469.500 H562.500 Z M645.500 279.500 V469.500 M738.500 279.500 V469.500 M738.500 382.500 H913.500" fill="none" stroke="#8000ff"/>
                ${tags.map((a) => svg`<g class="tagtext"><text x=${a.x} y=${a.y}>Area</text><path d="M${a.x - 7} ${a.y + 0.5} h14" stroke="#777" stroke-width="1"/><text x=${a.x} y=${a.y + 6}>${a.size}</text></g>`)}
                ${markers.map((m) => svg`<g transform="translate(${m.x} ${m.y}) rotate(${m.turn})"><path d="M5 -9 L12.500 0 L5 9 Z" fill="#000"/><circle r="9.500" fill="#fff" stroke="#000"/><path d="M-1 0 H1 M13 0 H15" stroke="#aaa"/></g>`)}
              </svg>
              <div class="nav">
                <svg width="24" height="24" viewBox="0 0 24 24"><rect x=".5" y="2.500" width="34" height="18" rx="8" fill="#ececec" stroke="#999"/><circle cx="10" cy="11" r="5" fill="#fff" stroke="#999" stroke-width="1.500"/><circle cx="10" cy="11" r="8" fill="none" stroke="#b5b5b5"/><path d="M13 17 Q17 15 16 19 L13 22 H19" fill="none" stroke="#4c8fd0" stroke-width="1.500"/></svg>
                <div class="arrow"></div>
                <hr>
                <svg width="24" height="18" viewBox="0 0 24 18"><rect x="4.500" y=".5" width="11" height="12" fill="#b4d6a8" stroke="#7da870"/><circle cx="15" cy="11" r="3.500" fill="#fff" stroke="#999"/></svg>
                <div class="arrow"></div>
              </div>
            </div>
          </main>
        </div>
        <svg class="cursor" width="13" height="20" viewBox="0 0 13 20"><path d="M.5 1 V17 L4.500 13.500 L7 19 L9.500 18 L7 12.500 H12 Z" fill="#fff" stroke="#111"/></svg>
        <div class="clock">0:00</div>
      </div>`;
  }
}
